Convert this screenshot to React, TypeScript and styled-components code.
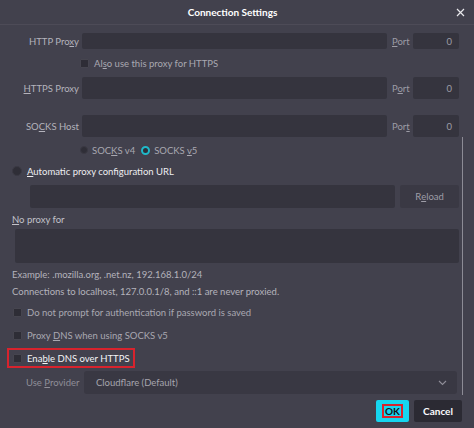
import React from "react";
import styled, { createGlobalStyle } from "styled-components";

const Global = createGlobalStyle`
  html, body { margin: 0; padding: 0; background: #42414d; }
  body { font-family: Lato, "Open Sans", sans-serif; font-size: 9.5px; color: #fbfbfe; }
  * { box-sizing: border-box; }
  u { text-decoration: underline; text-underline-offset: 1px; }
`;

const Dialog = styled.div`
  width: 474px;
  height: 428px;
  display: flex;
  flex-direction: column;
  background: #42414d;
  overflow: hidden;
`;

const Header = styled.div`
  height: 25px;
  flex: none;
  display: grid;
  grid-template-columns: 1fr auto 1fr;
  align-items: center;
  border-bottom: 1px solid #57566180;
  padding-right: 9px;
`;

const Title = styled.div`
  grid-column: 2;
  font-weight: 700;
  font-size: 10px;
  color: #ffffff;
`;

const Close = styled.div`
  grid-column: 3;
  justify-self: end;
  display: flex;
  align-items: center;
`;

const ProxyRow = styled.div<{ $h: number; $mt: number }>`
  display: grid;
  grid-template-columns: 79px 1fr 20px 46px;
  column-gap: 3px;
  align-items: center;
  height: ${(p) => p.$h}px;
  margin-top: ${(p) => p.$mt}px;
  margin-right: 15px;
`;

const RowLabel = styled.label<{ $color?: string; $start?: boolean }>`
  justify-self: ${(p) => (p.$start ? "start" : "end")};
  color: ${(p) => p.$color || "#b4b3bc"};
  white-space: nowrap;
`;

const PortLabel = styled.label`
  color: #9d9ca6;
  padding-left: 2px;
`;

const Field = styled.div<{ $align?: string }>`
  height: 100%;
  background: #35343e;
  border-radius: 2px;
  display: flex;
  align-items: center;
  justify-content: ${(p) => p.$align || "flex-start"};
  padding: 0 7px;
  color: #9d9ca6;
`;

const CheckRow = styled.div<{ $mt: number; $ml: number; $color?: string }>`
  display: flex;
  align-items: center;
  gap: 5px;
  height: 18px;
  margin-top: ${(p) => p.$mt}px;
  margin-left: ${(p) => p.$ml}px;
  color: ${(p) => p.$color || "#a9a8b1"};
  white-space: nowrap;
`;

const Box = styled.span`
  width: 9px;
  height: 9px;
  flex: none;
  background: #2e2d36;
  border: 1px solid #46454f;
  border-radius: 1px;
`;

const Highlight = styled.div`
  display: flex;
  align-items: center;
  align-self: flex-start;
  gap: 5px;
  height: 20px;
  margin-top: 4px;
  margin-left: 7px;
  padding: 0 3px 0 4px;
  border: 2px solid #d8232d;
  color: #f4f4f6;
  white-space: nowrap;
`;

const Radio = styled.span<{ $on?: boolean; $size?: number }>`
  width: ${(p) => p.$size || 8}px;
  height: ${(p) => p.$size || 8}px;
  flex: none;
  border-radius: 50%;
  background: #2f2e37;
  border: ${(p) => (p.$on ? "2px solid #1fb8c9" : "1px solid #3a3943")};
`;

const RadioGroup = styled.div`
  display: flex;
  align-items: center;
  height: 18px;
  margin-top: 4px;
  margin-left: 80px;
  gap: 6px;
  color: #a9a8b1;
`;

const RadioItem = styled.span`
  display: flex;
  align-items: center;
  gap: 4px;
`;

const Section = styled.div`
  display: flex;
  flex-direction: column;
  border-right: 1px solid #8c8b95;
  width: 463px;
  padding-right: 3px;
  padding-bottom: 1px;
`;

const UrlRow = styled.div`
  display: grid;
  grid-template-columns: 1fr 59px;
  column-gap: 5px;
  height: 23px;
  margin-top: 5px;
  margin-left: 30px;
`;

const SmallButton = styled.div`
  background: #3a3944;
  border-radius: 2px;
  display: flex;
  align-items: center;
  justify-content: center;
  color: #9e9da7;
`;

const Text = styled.div<{ $mt: number; $color?: string }>`
  height: 14px;
  display: flex;
  align-items: center;
  margin-top: ${(p) => p.$mt}px;
  margin-left: 12px;
  color: ${(p) => p.$color || "#b4b3bc"};
  white-space: nowrap;
`;

const TextArea = styled.div`
  height: 34px;
  margin-top: 3px;
  margin-left: 15px;
  background: #35343e;
  border-radius: 2px;
`;

const ProviderRow = styled.div`
  display: grid;
  grid-template-columns: 58px 1fr;
  align-items: center;
  height: 23px;
  margin-top: 3px;
  margin-left: 26px;
  margin-right: 2px;
`;

const Select = styled.div`
  height: 100%;
  background: #393843;
  border-radius: 3px;
  display: flex;
  align-items: center;
  justify-content: space-between;
  padding: 0 10px 0 12px;
  color: #a6a5ae;
`;

const Footer = styled.div`
  display: flex;
  justify-content: flex-end;
  gap: 5px;
  padding: 5px 12px 0 0;
`;

const Button = styled.div<{ $primary?: boolean; $w: number }>`
  width: ${(p) => p.$w}px;
  height: 22px;
  border-radius: 2px;
  display: flex;
  align-items: center;
  justify-content: center;
  font-weight: 700;
  font-size: 10px;
  background: ${(p) => (p.$primary ? "#16d6f0" : "#2b2a33")};
  color: ${(p) => (p.$primary ? "#15141a" : "#fbfbfe")};
`;

const OkMark = styled.span`
  border: 2px solid #d8232d;
  padding: 0 1px;
  height: 14px;
  display: flex;
  align-items: center;
`;

export default function App() {
  return (
    <Dialog>
      <Global />
      <Header>
        <Title>Connection Settings</Title>
        <Close>
          <svg width="9" height="9" viewBox="0 0 9 9">
            <path d="M1 1L8 8M8 1L1 8" stroke="#e8e8ec" strokeWidth="1.2" fill="none" />
          </svg>
        </Close>
      </Header>

      <ProxyRow $h={16} $mt={8}>
        <RowLabel>
          HTTP Pro<u>x</u>y
        </RowLabel>
        <Field />
        <PortLabel>
          <u>P</u>ort
        </PortLabel>
        <Field $align="flex-end">0</Field>
      </ProxyRow>

      <CheckRow $mt={5} $ml={80}>
        <Box />
        <span>
          Al<u>s</u>o use this proxy for HTTPS
        </span>
      </CheckRow>

      <ProxyRow $h={22} $mt={5}>
        <RowLabel>
          <u>H</u>TTPS Proxy
        </RowLabel>
        <Field />
        <PortLabel>
          P<u>o</u>rt
        </PortLabel>
        <Field $align="flex-end">0</Field>
      </ProxyRow>

      <ProxyRow $h={22} $mt={16}>
        <RowLabel>
          SO<u>C</u>KS Host
        </RowLabel>
        <Field />
        <PortLabel>
          Por<u>t</u>
        </PortLabel>
        <Field $align="flex-end">0</Field>
      </ProxyRow>

      <Section>
        <RadioGroup>
          <RadioItem>
            <Radio />
            <span>
              SOC<u>K</u>S v4
            </span>
          </RadioItem>
          <RadioItem>
            <Radio $on $size={9} />
            <span>
              SOCKS <u>v</u>5
            </span>
          </RadioItem>
        </RadioGroup>

        <CheckRow $mt={3} $ml={12} $color="#eeeef1">
          <Radio $size={10} />
          <span>
            <u>A</u>utomatic proxy configuration URL
          </span>
        </CheckRow>

        <UrlRow>
          <Field />
          <SmallButton>
            R<u>e</u>load
          </SmallButton>
        </UrlRow>

        <Text $mt={4} $color="#c3c2ca">
          <span>
            <u>N</u>o proxy for
          </span>
        </Text>
        <TextArea />

        <Text $mt={4}>Example: .mozilla.org, .net.nz, 192.168.1.0/24</Text>
        <Text $mt={3}>Connections to localhost, 127.0.0.1/8, and ::1 are never proxied.</Text>

        <CheckRow $mt={5} $ml={13}>
          <Box />
          <span>
            Do not prompt for authent<u>i</u>cation if password is saved
          </span>
        </CheckRow>

        <CheckRow $mt={5} $ml={13}>
          <Box />
          <span>
            Proxy <u>D</u>NS when using SOCKS v5
          </span>
        </CheckRow>

        <Highlight>
          <Box />
          <span>
            Ena<u>b</u>le DNS over HTTPS
          </span>
        </Highlight>

        <ProviderRow>
          <RowLabel as="span" $color="#8f8e98" $start>
            Use <u>P</u>rovider
          </RowLabel>
          <Select>
            <span>Cloudflare (Default)</span>
            <svg width="9" height="6" viewBox="0 0 9 6">
              <path d="M1 1L4.5 4.5L8 1" stroke="#8f8e98" strokeWidth="1.1" fill="none" />
            </svg>
          </Select>
        </ProviderRow>
      </Section>

      <Footer>
        <Button $primary $w={33}>
          <OkMark>OK</OkMark>
        </Button>
        <Button $w={48}>Cancel</Button>
      </Footer>
    </Dialog>
  );
}
